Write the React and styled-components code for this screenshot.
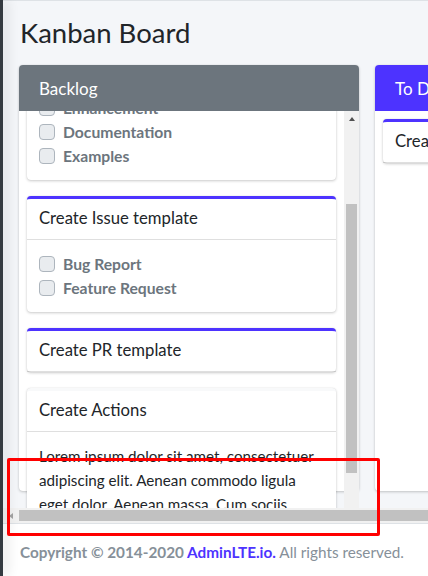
import React, { useLayoutEffect, useRef } from 'react';
import styled, { createGlobalStyle } from 'styled-components';

const FONT = `"Lato", "Liberation Sans", sans-serif`;
const PRIMARY = '#4d33ff';

const GlobalStyle = createGlobalStyle`
  html, body { margin: 0; padding: 0; }
  body {
    font-family: ${FONT};
    width: 428px;
    height: 576px;
    overflow: hidden;
    background: #fff;
    color: #212529;
  }
  *, *::before, *::after { box-sizing: border-box; }
`;

const Shell = styled.div`
  position: relative;
  display: flex;
  width: 428px;
  height: 576px;
  overflow: hidden;
`;

const Sidebar = styled.aside`
  flex: 0 0 3px;
  background: #343a40;
  box-shadow: 3px 0 12px rgba(0, 0, 0, 0.24);
  z-index: 3;
`;

const Main = styled.div`
  flex: 1;
  min-width: 0;
  display: flex;
  flex-direction: column;
`;

const ContentWrapper = styled.div`
  flex: 0 0 523px;
  display: flex;
  flex-direction: column;
  background: #f4f6f9;
  border-top: 1px solid #dee2e6;
  overflow: hidden;
`;

const Viewport = styled.div`
  flex: 1;
  min-height: 0;
  overflow: hidden;
  padding-left: 16px;
`;

const PageTitle = styled.h1`
  margin: 0;
  padding: 15px 0 0 1px;
  font-size: 27.5px;
  line-height: 33px;
  font-weight: 400;
  color: #212529;
`;

const Board = styled.div`
  display: flex;
  align-items: flex-start;
  gap: 16px;
  margin-top: 16px;
`;

const Column = styled.section`
  flex: 0 0 340px;
  height: 426px;
  display: flex;
  flex-direction: column;
  background: #fff;
  border-radius: 4px;
  box-shadow: 0 0 1px rgba(0, 0, 0, 0.125), 0 1px 3px rgba(0, 0, 0, 0.2);
`;

const ColumnHeader = styled.header`
  flex: 0 0 46px;
  display: flex;
  align-items: center;
  padding: 0 20px;
  background: ${(p) => p.$bg};
  color: #fff;
  font-size: 17px;
  border-radius: 4px 4px 0 0;
`;

const ColumnBody = styled.div`
  flex: 0 0 420px;
  display: flex;
  min-height: 0;
`;

const ScrollArea = styled.div`
  flex: 1;
  min-width: 0;
  overflow: hidden;
  padding: 8px;
`;

const VScrollbar = styled.div`
  flex: 0 0 15px;
  display: flex;
  flex-direction: column;
  background: #f1f1f1;
`;

const UpArrow = styled.div`
  flex: 0 0 15px;
  display: flex;
  align-items: center;
  justify-content: center;
  &::before {
    content: '';
    border-left: 3.5px solid transparent;
    border-right: 3.5px solid transparent;
    border-bottom: 4px solid #505050;
  }
`;

const VThumb = styled.div`
  margin: ${(p) => p.$offset}px 2px 0;
  height: ${(p) => p.$size}px;
  flex: 0 0 auto;
  background: #c1c1c1;
`;

const Card = styled.article`
  background: #fff;
  border-radius: 4px;
  border-top: 3px solid ${(p) => p.$accent};
  box-shadow: 0 0 1px rgba(0, 0, 0, 0.125), 0 1px 3px rgba(0, 0, 0, 0.2);
  margin-bottom: 16px;
`;

const CardHeader = styled.div`
  padding: 7px 12px 9px;
  border-bottom: 1px solid rgba(0, 0, 0, 0.125);
  font-size: 16.7px;
  line-height: 24px;
  white-space: nowrap;
  color: #212529;
`;

const CardBody = styled.div`
  padding: 12px;
`;

const CheckRow = styled.label`
  display: flex;
  align-items: center;
  gap: 8px;
  height: 24px;
  font-size: 15.7px;
  font-weight: 700;
  color: #6c757d;
`;

const Box = styled.span`
  flex: 0 0 16px;
  width: 16px;
  height: 16px;
  border: 1px solid #adb5bd;
  border-radius: 4px;
  background: #e9ecef;
`;

const Text = styled.p`
  margin: 0;
  font-size: 15.2px;
  line-height: 24px;
  color: #212529;
`;

const HScrollbar = styled.div`
  flex: 0 0 15px;
  display: flex;
  align-items: center;
  background: #f1f1f1;
`;

const LeftArrow = styled.div`
  flex: 0 0 15px;
  display: flex;
  align-items: center;
  justify-content: center;
  &::before {
    content: '';
    border-top: 3.5px solid transparent;
    border-bottom: 3.5px solid transparent;
    border-right: 4px solid #a3a3a3;
  }
`;

const HThumb = styled.div`
  flex: 1;
  height: 11px;
  margin-left: 1px;
  background: #c1c1c1;
`;

const Footer = styled.footer`
  flex: 1;
  background: #fff;
  border-top: 1px solid #dee2e6;
  padding: 16px 17px;
  font-size: 15.3px;
  line-height: 24px;
  color: #869099;
  white-space: nowrap;
`;

const Strong = styled.strong`
  font-weight: 700;
`;

const Link = styled.a`
  color: ${PRIMARY};
  text-decoration: none;
  font-weight: 700;
`;

const Annotation = styled.div`
  position: absolute;
  left: 7px;
  top: 458px;
  width: 373px;
  height: 78px;
  border: 3px solid #ff0000;
  border-radius: 2px;
  pointer-events: none;
  z-index: 10;
`;

function Check({ children }) {
  return (
    <CheckRow>
      <Box />
      {children}
    </CheckRow>
  );
}

function BacklogList() {
  const ref = useRef(null);
  useLayoutEffect(() => {
    if (ref.current) ref.current.scrollTop = 127;
  }, []);
  return (
    <ScrollArea ref={ref}>
      <Card $accent="#17a2b8">
        <CardHeader>Create Labels</CardHeader>
        <CardBody>
          <Check>Bug</Check>
          <Check>Feature</Check>
          <Check>Enhancement</Check>
          <Check>Documentation</Check>
          <Check>Examples</Check>
        </CardBody>
      </Card>
      <Card $accent={PRIMARY}>
        <CardHeader>Create Issue template</CardHeader>
        <CardBody>
          <Check>Bug Report</Check>
          <Check>Feature Request</Check>
        </CardBody>
      </Card>
      <Card $accent={PRIMARY}>
        <CardHeader>Create PR template</CardHeader>
      </Card>
      <Card $accent="#f8f9fa">
        <CardHeader>Create Actions</CardHeader>
        <CardBody>
          <Text>
            Lorem ipsum dolor sit amet, consectetuer adipiscing elit. Aenean commodo ligula eget dolor.
            Aenean massa. Cum sociis natoque penatibus et magnis dis parturient montes, nascetur ridiculus mus.
          </Text>
        </CardBody>
      </Card>
    </ScrollArea>
  );
}

export default function App() {
  return (
    <>
      <GlobalStyle />
      <Shell>
        <Sidebar />
        <Main>
          <ContentWrapper>
            <Viewport>
              <PageTitle>Kanban Board</PageTitle>
              <Board>
                <Column>
                  <ColumnHeader $bg="#6c757d">Backlog</ColumnHeader>
                  <ColumnBody>
                    <BacklogList />
                    <VScrollbar>
                      <UpArrow />
                      <VThumb $offset={78} $size={269} />
                    </VScrollbar>
                  </ColumnBody>
                </Column>
                <Column>
                  <ColumnHeader $bg={PRIMARY}>To Do</ColumnHeader>
                  <ColumnBody>
                    <ScrollArea>
                      <Card $accent={PRIMARY}>
                        <CardHeader>Create first milestone</CardHeader>
                      </Card>
                    </ScrollArea>
                  </ColumnBody>
                </Column>
              </Board>
            </Viewport>
            <HScrollbar>
              <LeftArrow />
              <HThumb />
            </HScrollbar>
          </ContentWrapper>
          <Footer>
            <Strong>
              Copyright © 2014-2020 <Link href="#">AdminLTE.io.</Link>
            </Strong>{' '}
            All rights reserved.
          </Footer>
        </Main>
      </Shell>
      <Annotation />
    </>
  );
}
